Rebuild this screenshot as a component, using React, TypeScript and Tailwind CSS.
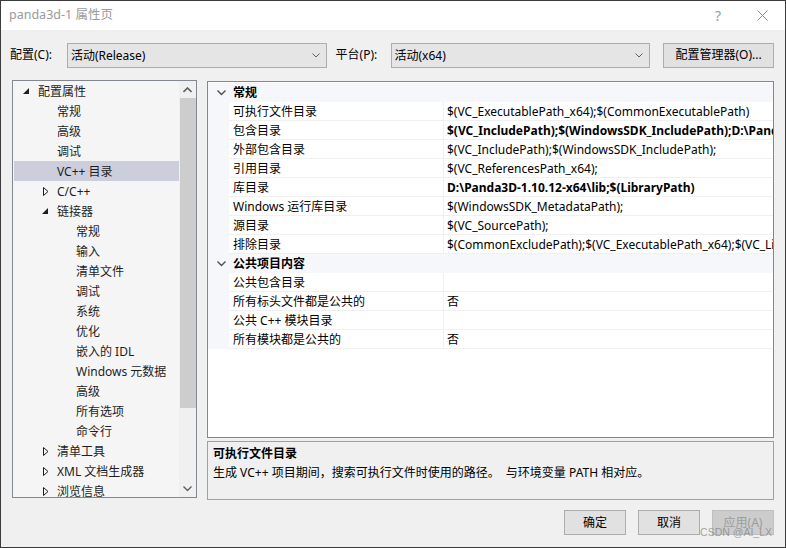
import React from "react";

const font = {
  fontFamily:
    '"Noto Sans", "Noto Sans CJK SC", sans-serif',
};

type TreeItem = {
  label: string;
  level: number;
  expand?: "open" | "closed";
  selected?: boolean;
};

const treeItems: TreeItem[] = [
  { label: "配置属性", level: 0, expand: "open" },
  { label: "常规", level: 1 },
  { label: "高级", level: 1 },
  { label: "调试", level: 1 },
  { label: "VC++ 目录", level: 1, selected: true },
  { label: "C/C++", level: 1, expand: "closed" },
  { label: "链接器", level: 1, expand: "open" },
  { label: "常规", level: 2 },
  { label: "输入", level: 2 },
  { label: "清单文件", level: 2 },
  { label: "调试", level: 2 },
  { label: "系统", level: 2 },
  { label: "优化", level: 2 },
  { label: "嵌入的 IDL", level: 2 },
  { label: "Windows 元数据", level: 2 },
  { label: "高级", level: 2 },
  { label: "所有选项", level: 2 },
  { label: "命令行", level: 2 },
  { label: "清单工具", level: 1, expand: "closed" },
  { label: "XML 文档生成器", level: 1, expand: "closed" },
  { label: "浏览信息", level: 1, expand: "closed" },
];

type Row = { name: string; value: string; bold?: boolean };

const groups: { title: string; rows: Row[] }[] = [
  {
    title: "常规",
    rows: [
      { name: "可执行文件目录", value: "$(VC_ExecutablePath_x64);$(CommonExecutablePath)" },
      { name: "包含目录", value: "$(VC_IncludePath);$(WindowsSDK_IncludePath);D:\\Panda3D-1.10.12-x64\\include;", bold: true },
      { name: "外部包含目录", value: "$(VC_IncludePath);$(WindowsSDK_IncludePath);" },
      { name: "引用目录", value: "$(VC_ReferencesPath_x64);" },
      { name: "库目录", value: "D:\\Panda3D-1.10.12-x64\\lib;$(LibraryPath)", bold: true },
      { name: "Windows 运行库目录", value: "$(WindowsSDK_MetadataPath);" },
      { name: "源目录", value: "$(VC_SourcePath);" },
      { name: "排除目录", value: "$(CommonExcludePath);$(VC_ExecutablePath_x64);$(VC_LibraryPath_x64)" },
    ],
  },
  {
    title: "公共项目内容",
    rows: [
      { name: "公共包含目录", value: "" },
      { name: "所有标头文件都是公共的", value: "否" },
      { name: "公共 C++ 模块目录", value: "" },
      { name: "所有模块都是公共的", value: "否" },
    ],
  },
];

function ChevronDown({ className }: { className?: string }) {
  return (
    <svg width="9" height="6" viewBox="0 0 9 6" className={className}>
      <polyline points="0.5,0.5 4.5,4.5 8.5,0.5" fill="none" stroke="currentColor" strokeWidth="1.4" />
    </svg>
  );
}

function ComboBox({ text }: { text: string }) {
  return (
    <div className="flex h-[25px] w-[260px] items-center justify-between border border-[#adadad] bg-[#e5e5e5] pl-[3px] pr-[6px] pt-[1px] text-[12px] text-black">
      <span>{text}</span>
      <svg width="8" height="5" viewBox="0 0 8 5">
        <polyline points="0.5,0.5 4,4 7.5,0.5" fill="none" stroke="#606060" strokeWidth="1" />
      </svg>
    </div>
  );
}

function Button({ label, disabled }: { label: string; disabled?: boolean }) {
  return (
    <div
      className={`flex h-[25px] w-[62px] items-center justify-center border text-[12px] ${
        disabled
          ? "border-[#bfbfbf] bg-[#cccccc] text-[#9d9d9d]"
          : "border-[#adadad] bg-[#e1e1e1] text-black"
      }`}
    >
      {label}
    </div>
  );
}

export default function App() {
  return (
    <div
      style={font}
      className="relative flex h-[548px] w-[786px] flex-col overflow-hidden border border-[#3c3c3c] bg-[#f0f0f0]"
    >
      {/* Title bar */}
      <div className="flex h-[29px] shrink-0 items-center justify-between bg-white pl-[8px] pr-[17px]">
        <span className="text-[12.5px] text-[#9a9a9a]">panda3d-1 属性页</span>
        <div className="flex items-center gap-[36px] text-[#9a9a9a]">
          <span className="text-[14px]">?</span>
          <svg width="11" height="11" viewBox="0 0 11 11">
            <line x1="0.5" y1="0.5" x2="10.5" y2="10.5" stroke="#8a8a8a" strokeWidth="1" />
            <line x1="10.5" y1="0.5" x2="0.5" y2="10.5" stroke="#8a8a8a" strokeWidth="1" />
          </svg>
        </div>
      </div>

      {/* Body */}
      <div className="flex flex-1 flex-col px-[11px]">
        {/* Config row */}
        <div className="ml-[-2px] mt-[12px] flex h-[25px] items-center pt-[1px] text-[12px] text-black">
          <span className="w-[57px]">配置(C):</span>
          <ComboBox text="活动(Release)" />
          <span className="w-[64px] pl-[9px]">平台(P):</span>
          <ComboBox text="活动(x64)" />
          <div className="ml-[13px] flex h-[25px] w-[111px] items-center justify-center border border-[#adadad] bg-[#e1e1e1]">
            配置管理器(O)...
          </div>
        </div>

        {/* Main */}
        <div className="mt-[13px] flex h-[420px] gap-[10px]">
          {/* Tree */}
          <div className="flex h-[418px] w-[186px] border border-[#828790] bg-[#f5f5f5]">
            <div className="flex-1 overflow-hidden">
              {treeItems.map((item, index) => (
                <div
                  key={index}
                  className={`relative ml-[1px] flex h-[20px] items-center pt-[1px] text-[12px] text-[#1e1e1e] ${
                    item.selected ? "bg-[#cccedb]" : ""
                  }`}
                >
                  {item.expand === "open" && (
                    <svg
                      width="6"
                      height="6"
                      viewBox="0 0 6 6"
                      className="absolute top-[7px]"
                      style={{ left: 9 + item.level * 19 }}
                    >
                      <polygon points="6,0 6,6 0,6" fill="#1e1e1e" />
                    </svg>
                  )}
                  {item.expand === "closed" && (
                    <svg
                      width="6"
                      height="9"
                      viewBox="0 0 6 9"
                      className="absolute top-[6px]"
                      style={{ left: 10 + item.level * 19 }}
                    >
                      <polygon points="0.5,0.5 5,4.5 0.5,8.5" fill="none" stroke="#1e1e1e" strokeWidth="1" />
                    </svg>
                  )}
                  <span style={{ paddingLeft: 24 + item.level * 19 }} className="whitespace-nowrap">
                    {item.label}
                  </span>
                </div>
              ))}
            </div>

            {/* Scrollbar */}
            <div className="flex w-[17px] flex-col bg-[#f0f0f0]">
              <div className="flex h-[17px] items-center justify-center">
                <svg width="9" height="6" viewBox="0 0 9 6">
                  <polyline points="0.5,5 4.5,1 8.5,5" fill="none" stroke="#606060" strokeWidth="1.6" />
                </svg>
              </div>
              <div className="ml-[1px] h-[310px] bg-[#cdcdcd]" />
              <div className="flex-1" />
              <div className="flex h-[17px] items-center justify-center text-[#606060]">
                <ChevronDown />
              </div>
            </div>
          </div>

          {/* Right column */}
          <div className="flex w-[567px] flex-col">
            <div className="mt-[1px] h-[358px] overflow-hidden border border-[#828790] bg-white pt-[1px]">
              {groups.map((group) => (
                <div key={group.title}>
                  <div className="flex h-[19px] items-center bg-[#f5f7fb] pt-[1px] text-[12px] font-bold text-black">
                    <div className="flex w-[25px] justify-center pl-[2px] text-[#505050]">
                      <ChevronDown />
                    </div>
                    <span>{group.title}</span>
                  </div>
                  {group.rows.map((row) => (
                    <div key={row.name} className="flex h-[19px] bg-[#f5f7fb] text-[12px] text-black">
                      <div className="w-[21px]" />
                      <div className="flex w-[215px] items-center border-b border-r border-[#f0f0f0] bg-white pl-[4px] pt-[1px] whitespace-nowrap">
                        {row.name}
                      </div>
                      <div
                        className={`flex flex-1 items-center overflow-hidden border-b border-[#f0f0f0] bg-white pl-[3px] pt-[1px] whitespace-nowrap ${
                          row.bold ? "font-bold" : ""
                        }`}
                      >
                        {row.value}
                      </div>
                    </div>
                  ))}
                </div>
              ))}
            </div>

            <div className="mt-[3px] h-[59px] border border-[#a0a0a0] bg-[#f0f0f0] pl-[5px] pt-[3px] text-[12px] text-black">
              <div className="font-bold">可执行文件目录</div>
              <div className="mt-[1px] whitespace-pre">生成 VC++ 项目期间，搜索可执行文件时使用的路径。  与环境变量 PATH 相对应。</div>
            </div>
          </div>
        </div>

        {/* Buttons */}
        <div className="mt-[10px] flex justify-end gap-[12px]">
          <Button label="确定" />
          <Button label="取消" />
          <Button label="应用(A)" disabled />
        </div>
      </div>

      {/* Watermark */}
      <div
        className="absolute bottom-[6px] right-[13px] text-[10.5px] text-[#8a8a8a]/80"
        style={{ fontFamily: '"Liberation Sans", Arial, sans-serif' }}
      >
        CSDN @AI_LX
      </div>
    </div>
  );
}
